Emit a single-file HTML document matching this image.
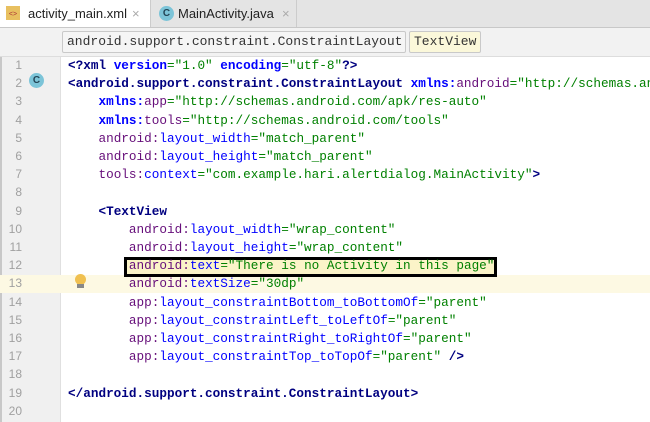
<!DOCTYPE html>
<html><head><style>
body{margin:0;width:650px;height:422px;overflow:hidden;background:#fff;font-family:"Liberation Mono",monospace;position:relative}
.tabs{position:absolute;left:0;top:0;width:650px;height:27px;background:#e4e4e4;border-bottom:1px solid #c8c8c8;font-family:"Liberation Sans",sans-serif;font-size:13px}
.tab{position:absolute;top:0;height:27px;line-height:28px;color:#222}
.crumb{position:absolute;left:0;top:28px;width:650px;height:28px;background:#f2f2f2;border-bottom:1px solid #ddd}
.btn{position:absolute;top:3px;height:20px;line-height:20px;border:1px solid #c9c9c9;border-radius:2px;font-size:13px;padding:0 4px;background:#f5f5f5;color:#333}
.gut{position:absolute;left:0;top:57px;width:60px;height:365px;background:#f0f0f0;border-left:2px solid #c8c8c8;box-sizing:border-box}
.sep{position:absolute;left:60px;top:57px;width:1px;height:365px;background:#e0e0e0}
.ln{position:absolute;left:0;width:22px;text-align:right;font-size:12px;color:#a0a0a0;font-family:"Liberation Sans",sans-serif}
#lines{position:absolute;left:0;top:0;width:650px;height:422px;overflow:hidden}
.cl{position:absolute;left:68px;font-size:12.7px;white-space:pre;color:#000;height:18px;line-height:18px}
.t{color:#000080;font-weight:bold}.n{color:#660e7a}.a{color:#0000ff}.v{color:#008000}.x{color:#0000ff;font-weight:bold}
</style></head><body>
<div class="tabs">
<div class="tab" style="left:0;width:150px;background:#fff;border-right:1px solid #ccc"><span style="position:absolute;left:6px;top:6px;width:14px;height:14px;background:#e8c060;font-size:7px;line-height:18px;color:#a33;text-align:center">&lt;&gt;</span><span style="position:absolute;left:28px">activity_main.xml</span><span style="position:absolute;left:132px;color:#aaa">×</span></div>
<div class="tab" style="left:151px;width:145px;border-right:1px solid #ccc"><span style="position:absolute;left:8px;top:6px;width:15px;height:15px;border-radius:50%;background:#7cc4d8;color:#245;font-size:10px;line-height:15px;text-align:center;font-weight:bold">C</span><span style="position:absolute;left:27px">MainActivity.java</span><span style="position:absolute;left:131px;color:#aaa">×</span></div>
</div>
<div class="crumb">
<div class="btn" style="left:62px;width:334px">android.support.constraint.ConstraintLayout</div>
<div class="btn" style="left:409px;background:#fbf8da;width:62px">TextView</div>
</div>
<div class="gut"></div><div class="sep"></div>
<div style="position:absolute;left:0;top:275px;width:650px;height:18px;background:#fdf9e3"></div>
<div style="position:absolute;left:124px;top:257px;width:373px;height:20px;border:3px solid #000;box-sizing:border-box;background:#fbf4c8"></div>
<div style="position:absolute;left:29px;top:73px;width:15px;height:15px;border-radius:50%;background:#7cc4d8;color:#245;font-size:10px;line-height:15px;text-align:center;font-weight:bold;font-family:'Liberation Sans',sans-serif">C</div>
<div style="position:absolute;left:75px;top:274px;width:11px;height:11px;border-radius:50%;background:#f0c050"></div>
<div style="position:absolute;left:77px;top:284px;width:7px;height:4px;background:#888"></div>
<div id="lines"></div>
<script>
var L=[
'<span class="t">&lt;?xml </span><span class="x">version</span><span class="v">="1.0" </span><span class="x">encoding</span><span class="v">="utf-8"</span><span class="t">?&gt;</span>',
'<span class="t">&lt;android.support.constraint.ConstraintLayout </span><span class="x">xmlns:</span><span class="n">android</span><span class="v">="http://schemas.android.com/apk/res/android"</span>',
'    <span class="x">xmlns:</span><span class="n">app</span><span class="v">="http://schemas.android.com/apk/res-auto"</span>',
'    <span class="x">xmlns:</span><span class="n">tools</span><span class="v">="http://schemas.android.com/tools"</span>',
'    <span class="n">android:</span><span class="a">layout_width</span><span class="v">="match_parent"</span>',
'    <span class="n">android:</span><span class="a">layout_height</span><span class="v">="match_parent"</span>',
'    <span class="n">tools:</span><span class="a">context</span><span class="v">="com.example.hari.alertdialog.MainActivity"</span><span class="t">&gt;</span>',
'',
'    <span class="t">&lt;TextView</span>',
'        <span class="n">android:</span><span class="a">layout_width</span><span class="v">="wrap_content"</span>',
'        <span class="n">android:</span><span class="a">layout_height</span><span class="v">="wrap_content"</span>',
'        <span class="n">android:</span><span class="a">text</span><span class="v">="There is no Activity in this page"</span>',
'        <span class="n">android:</span><span class="a">textSize</span><span class="v">="30dp"</span>',
'        <span class="n">app:</span><span class="a">layout_constraintBottom_toBottomOf</span><span class="v">="parent"</span>',
'        <span class="n">app:</span><span class="a">layout_constraintLeft_toLeftOf</span><span class="v">="parent"</span>',
'        <span class="n">app:</span><span class="a">layout_constraintRight_toRightOf</span><span class="v">="parent"</span>',
'        <span class="n">app:</span><span class="a">layout_constraintTop_toTopOf</span><span class="v">="parent" </span><span class="t">/&gt;</span>',
'','<span class="t">&lt;/android.support.constraint.ConstraintLayout&gt;</span>',''];
var h='';for(var i=0;i<20;i++){var y=57+18.2*i;h+='<div class="ln" style="top:'+(y+1)+'px">'+(i+1)+'</div><div class="cl" style="top:'+y+'px">'+L[i]+'</div>';}
document.getElementById('lines').innerHTML=h;
</script>
</body></html>
